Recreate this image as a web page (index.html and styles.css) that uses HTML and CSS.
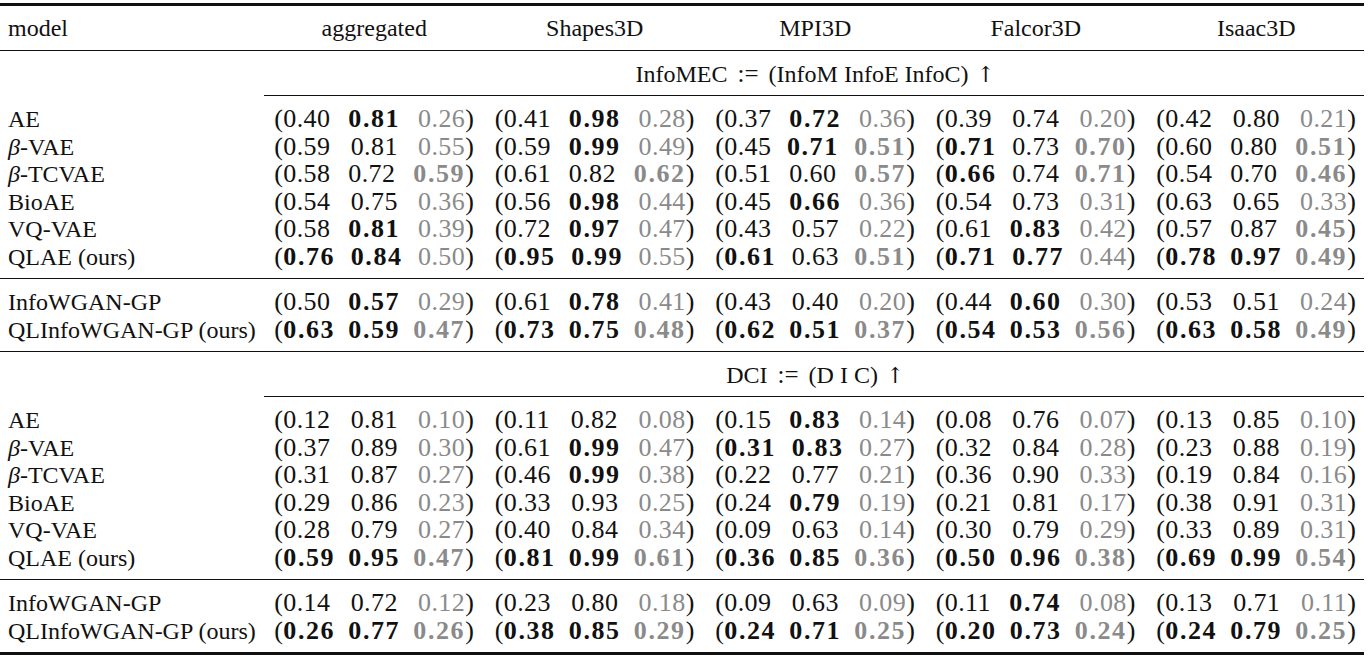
FILE: index.html
```html
<!DOCTYPE html>
<html>
<head>
<meta charset="utf-8">
<link rel="stylesheet" href="styles.css">
</head>
<body>
<div class="table">
  <div class="rule thick"></div>
  <div class="row head">
    <div class="name">model</div>
    <div class="col">aggregated</div>
    <div class="col">Shapes3D</div>
    <div class="col">MPI3D</div>
    <div class="col">Falcor3D</div>
    <div class="col">Isaac3D</div>
  </div>
  <div class="rule mid"></div>
  <div class="row group">
    <div class="name"></div>
    <div class="span">InfoMEC <span class="op">:=</span> (InfoM InfoE InfoC) <span class="arrow">↑</span></div>
  </div>
  <div class="rule cmid"></div>

  <div class="row">
    <div class="name">AE</div>
    <div class="tup"><span class="n">(0.40</span><span class="n b">0.81</span><span class="n"><span class="g">0.26</span>)</span></div>
    <div class="tup"><span class="n">(0.41</span><span class="n b">0.98</span><span class="n"><span class="g">0.28</span>)</span></div>
    <div class="tup"><span class="n">(0.37</span><span class="n b">0.72</span><span class="n"><span class="g">0.36</span>)</span></div>
    <div class="tup"><span class="n">(0.39</span><span class="n">0.74</span><span class="n"><span class="g">0.20</span>)</span></div>
    <div class="tup"><span class="n">(0.42</span><span class="n">0.80</span><span class="n"><span class="g">0.21</span>)</span></div>
  </div>
  <div class="row">
    <div class="name"><span class="beta">β</span>-VAE</div>
    <div class="tup"><span class="n">(0.59</span><span class="n">0.81</span><span class="n"><span class="g">0.55</span>)</span></div>
    <div class="tup"><span class="n">(0.59</span><span class="n b">0.99</span><span class="n"><span class="g">0.49</span>)</span></div>
    <div class="tup"><span class="n">(0.45</span><span class="n b">0.71</span><span class="n"><span class="g b">0.51</span>)</span></div>
    <div class="tup"><span class="n">(<span class="b">0.71</span></span><span class="n">0.73</span><span class="n"><span class="g b">0.70</span>)</span></div>
    <div class="tup"><span class="n">(0.60</span><span class="n">0.80</span><span class="n"><span class="g b">0.51</span>)</span></div>
  </div>
  <div class="row">
    <div class="name"><span class="beta">β</span>-TCVAE</div>
    <div class="tup"><span class="n">(0.58</span><span class="n">0.72</span><span class="n"><span class="g b">0.59</span>)</span></div>
    <div class="tup"><span class="n">(0.61</span><span class="n">0.82</span><span class="n"><span class="g b">0.62</span>)</span></div>
    <div class="tup"><span class="n">(0.51</span><span class="n">0.60</span><span class="n"><span class="g b">0.57</span>)</span></div>
    <div class="tup"><span class="n">(<span class="b">0.66</span></span><span class="n">0.74</span><span class="n"><span class="g b">0.71</span>)</span></div>
    <div class="tup"><span class="n">(0.54</span><span class="n">0.70</span><span class="n"><span class="g b">0.46</span>)</span></div>
  </div>
  <div class="row">
    <div class="name">BioAE</div>
    <div class="tup"><span class="n">(0.54</span><span class="n">0.75</span><span class="n"><span class="g">0.36</span>)</span></div>
    <div class="tup"><span class="n">(0.56</span><span class="n b">0.98</span><span class="n"><span class="g">0.44</span>)</span></div>
    <div class="tup"><span class="n">(0.45</span><span class="n b">0.66</span><span class="n"><span class="g">0.36</span>)</span></div>
    <div class="tup"><span class="n">(0.54</span><span class="n">0.73</span><span class="n"><span class="g">0.31</span>)</span></div>
    <div class="tup"><span class="n">(0.63</span><span class="n">0.65</span><span class="n"><span class="g">0.33</span>)</span></div>
  </div>
  <div class="row">
    <div class="name">VQ-VAE</div>
    <div class="tup"><span class="n">(0.58</span><span class="n b">0.81</span><span class="n"><span class="g">0.39</span>)</span></div>
    <div class="tup"><span class="n">(0.72</span><span class="n b">0.97</span><span class="n"><span class="g">0.47</span>)</span></div>
    <div class="tup"><span class="n">(0.43</span><span class="n">0.57</span><span class="n"><span class="g">0.22</span>)</span></div>
    <div class="tup"><span class="n">(0.61</span><span class="n b">0.83</span><span class="n"><span class="g">0.42</span>)</span></div>
    <div class="tup"><span class="n">(0.57</span><span class="n">0.87</span><span class="n"><span class="g b">0.45</span>)</span></div>
  </div>
  <div class="row">
    <div class="name">QLAE (ours)</div>
    <div class="tup"><span class="n">(<span class="b">0.76</span></span><span class="n b">0.84</span><span class="n"><span class="g">0.50</span>)</span></div>
    <div class="tup"><span class="n">(<span class="b">0.95</span></span><span class="n b">0.99</span><span class="n"><span class="g">0.55</span>)</span></div>
    <div class="tup"><span class="n">(<span class="b">0.61</span></span><span class="n">0.63</span><span class="n"><span class="g b">0.51</span>)</span></div>
    <div class="tup"><span class="n">(<span class="b">0.71</span></span><span class="n b">0.77</span><span class="n"><span class="g">0.44</span>)</span></div>
    <div class="tup"><span class="n">(<span class="b">0.78</span></span><span class="n b">0.97</span><span class="n"><span class="g b">0.49</span>)</span></div>
  </div>
  <div class="rule mid"></div>
  <div class="row">
    <div class="name">InfoWGAN-GP</div>
    <div class="tup"><span class="n">(0.50</span><span class="n b">0.57</span><span class="n"><span class="g">0.29</span>)</span></div>
    <div class="tup"><span class="n">(0.61</span><span class="n b">0.78</span><span class="n"><span class="g">0.41</span>)</span></div>
    <div class="tup"><span class="n">(0.43</span><span class="n">0.40</span><span class="n"><span class="g">0.20</span>)</span></div>
    <div class="tup"><span class="n">(0.44</span><span class="n b">0.60</span><span class="n"><span class="g">0.30</span>)</span></div>
    <div class="tup"><span class="n">(0.53</span><span class="n">0.51</span><span class="n"><span class="g">0.24</span>)</span></div>
  </div>
  <div class="row">
    <div class="name">QLInfoWGAN-GP (ours)</div>
    <div class="tup"><span class="n">(<span class="b">0.63</span></span><span class="n b">0.59</span><span class="n"><span class="g b">0.47</span>)</span></div>
    <div class="tup"><span class="n">(<span class="b">0.73</span></span><span class="n b">0.75</span><span class="n"><span class="g b">0.48</span>)</span></div>
    <div class="tup"><span class="n">(<span class="b">0.62</span></span><span class="n b">0.51</span><span class="n"><span class="g b">0.37</span>)</span></div>
    <div class="tup"><span class="n">(<span class="b">0.54</span></span><span class="n b">0.53</span><span class="n"><span class="g b">0.56</span>)</span></div>
    <div class="tup"><span class="n">(<span class="b">0.63</span></span><span class="n b">0.58</span><span class="n"><span class="g b">0.49</span>)</span></div>
  </div>
  <div class="rule mid"></div>

  <div class="row group">
    <div class="name"></div>
    <div class="span">DCI <span class="op">:=</span> (D I C) <span class="arrow">↑</span></div>
  </div>
  <div class="rule cmid"></div>

  <div class="row">
    <div class="name">AE</div>
    <div class="tup"><span class="n">(0.12</span><span class="n">0.81</span><span class="n"><span class="g">0.10</span>)</span></div>
    <div class="tup"><span class="n">(0.11</span><span class="n">0.82</span><span class="n"><span class="g">0.08</span>)</span></div>
    <div class="tup"><span class="n">(0.15</span><span class="n b">0.83</span><span class="n"><span class="g">0.14</span>)</span></div>
    <div class="tup"><span class="n">(0.08</span><span class="n">0.76</span><span class="n"><span class="g">0.07</span>)</span></div>
    <div class="tup"><span class="n">(0.13</span><span class="n">0.85</span><span class="n"><span class="g">0.10</span>)</span></div>
  </div>
  <div class="row">
    <div class="name"><span class="beta">β</span>-VAE</div>
    <div class="tup"><span class="n">(0.37</span><span class="n">0.89</span><span class="n"><span class="g">0.30</span>)</span></div>
    <div class="tup"><span class="n">(0.61</span><span class="n b">0.99</span><span class="n"><span class="g">0.47</span>)</span></div>
    <div class="tup"><span class="n">(<span class="b">0.31</span></span><span class="n b">0.83</span><span class="n"><span class="g">0.27</span>)</span></div>
    <div class="tup"><span class="n">(0.32</span><span class="n">0.84</span><span class="n"><span class="g">0.28</span>)</span></div>
    <div class="tup"><span class="n">(0.23</span><span class="n">0.88</span><span class="n"><span class="g">0.19</span>)</span></div>
  </div>
  <div class="row">
    <div class="name"><span class="beta">β</span>-TCVAE</div>
    <div class="tup"><span class="n">(0.31</span><span class="n">0.87</span><span class="n"><span class="g">0.27</span>)</span></div>
    <div class="tup"><span class="n">(0.46</span><span class="n b">0.99</span><span class="n"><span class="g">0.38</span>)</span></div>
    <div class="tup"><span class="n">(0.22</span><span class="n">0.77</span><span class="n"><span class="g">0.21</span>)</span></div>
    <div class="tup"><span class="n">(0.36</span><span class="n">0.90</span><span class="n"><span class="g">0.33</span>)</span></div>
    <div class="tup"><span class="n">(0.19</span><span class="n">0.84</span><span class="n"><span class="g">0.16</span>)</span></div>
  </div>
  <div class="row">
    <div class="name">BioAE</div>
    <div class="tup"><span class="n">(0.29</span><span class="n">0.86</span><span class="n"><span class="g">0.23</span>)</span></div>
    <div class="tup"><span class="n">(0.33</span><span class="n">0.93</span><span class="n"><span class="g">0.25</span>)</span></div>
    <div class="tup"><span class="n">(0.24</span><span class="n b">0.79</span><span class="n"><span class="g">0.19</span>)</span></div>
    <div class="tup"><span class="n">(0.21</span><span class="n">0.81</span><span class="n"><span class="g">0.17</span>)</span></div>
    <div class="tup"><span class="n">(0.38</span><span class="n">0.91</span><span class="n"><span class="g">0.31</span>)</span></div>
  </div>
  <div class="row">
    <div class="name">VQ-VAE</div>
    <div class="tup"><span class="n">(0.28</span><span class="n">0.79</span><span class="n"><span class="g">0.27</span>)</span></div>
    <div class="tup"><span class="n">(0.40</span><span class="n">0.84</span><span class="n"><span class="g">0.34</span>)</span></div>
    <div class="tup"><span class="n">(0.09</span><span class="n">0.63</span><span class="n"><span class="g">0.14</span>)</span></div>
    <div class="tup"><span class="n">(0.30</span><span class="n">0.79</span><span class="n"><span class="g">0.29</span>)</span></div>
    <div class="tup"><span class="n">(0.33</span><span class="n">0.89</span><span class="n"><span class="g">0.31</span>)</span></div>
  </div>
  <div class="row">
    <div class="name">QLAE (ours)</div>
    <div class="tup"><span class="n">(<span class="b">0.59</span></span><span class="n b">0.95</span><span class="n"><span class="g b">0.47</span>)</span></div>
    <div class="tup"><span class="n">(<span class="b">0.81</span></span><span class="n b">0.99</span><span class="n"><span class="g b">0.61</span>)</span></div>
    <div class="tup"><span class="n">(<span class="b">0.36</span></span><span class="n b">0.85</span><span class="n"><span class="g b">0.36</span>)</span></div>
    <div class="tup"><span class="n">(<span class="b">0.50</span></span><span class="n b">0.96</span><span class="n"><span class="g b">0.38</span>)</span></div>
    <div class="tup"><span class="n">(<span class="b">0.69</span></span><span class="n b">0.99</span><span class="n"><span class="g b">0.54</span>)</span></div>
  </div>
  <div class="rule mid"></div>
  <div class="row">
    <div class="name">InfoWGAN-GP</div>
    <div class="tup"><span class="n">(0.14</span><span class="n">0.72</span><span class="n"><span class="g">0.12</span>)</span></div>
    <div class="tup"><span class="n">(0.23</span><span class="n">0.80</span><span class="n"><span class="g">0.18</span>)</span></div>
    <div class="tup"><span class="n">(0.09</span><span class="n">0.63</span><span class="n"><span class="g">0.09</span>)</span></div>
    <div class="tup"><span class="n">(0.11</span><span class="n b">0.74</span><span class="n"><span class="g">0.08</span>)</span></div>
    <div class="tup"><span class="n">(0.13</span><span class="n">0.71</span><span class="n"><span class="g">0.11</span>)</span></div>
  </div>
  <div class="row">
    <div class="name">QLInfoWGAN-GP (ours)</div>
    <div class="tup"><span class="n">(<span class="b">0.26</span></span><span class="n b">0.77</span><span class="n"><span class="g b">0.26</span>)</span></div>
    <div class="tup"><span class="n">(<span class="b">0.38</span></span><span class="n b">0.85</span><span class="n"><span class="g b">0.29</span>)</span></div>
    <div class="tup"><span class="n">(<span class="b">0.24</span></span><span class="n b">0.71</span><span class="n"><span class="g b">0.25</span>)</span></div>
    <div class="tup"><span class="n">(<span class="b">0.20</span></span><span class="n b">0.73</span><span class="n"><span class="g b">0.24</span>)</span></div>
    <div class="tup"><span class="n">(<span class="b">0.24</span></span><span class="n b">0.79</span><span class="n"><span class="g b">0.25</span>)</span></div>
  </div>
  <div class="rule thick"></div>
</div>
</body>
</html>
```
FILE: styles.css
```css
html, body {
  margin: 0;
  padding: 0;
  background: #ffffff;
}

body {
  font-family: "Liberation Serif", "Times New Roman", serif;
  color: #111111;
}

.table {
  width: 1364px;
  padding-top: 3px;
}

.rule {
  background: #111111;
  margin: 7.5px 0 9px 0;
}

.rule.thick {
  height: 2.6px;
}

.table > .rule.thick:first-child {
  margin-top: 0;
}

.rule.mid {
  height: 1.6px;
}

.rule.cmid {
  height: 1px;
  margin-left: 264px;
}

.row {
  display: grid;
  grid-template-columns: 264px repeat(5, 220.5px);
  height: 27.5px;
  align-items: baseline;
  font-size: 24px;
  line-height: 27.5px;
}

.name {
  padding-left: 8px;
  white-space: nowrap;
}

.beta {
  font-style: italic;
}

.col {
  text-align: center;
}

.group .span {
  grid-column: 2 / 7;
  text-align: center;
  white-space: nowrap;
}

.op {
  font-size: 25px;
  padding: 0 4px;
}

.arrow {
  font-family: "DejaVu Serif", serif;
  font-variant-emoji: text;
  font-size: 22px;
  color: #111111;
  padding-left: 2px;
}

.tup {
  justify-self: center;
  width: 200px;
  display: flex;
  justify-content: space-between;
  align-items: baseline;
  font-size: 26px;
  white-space: nowrap;
}

.n {
  letter-spacing: 0.4px;
}

.b {
  font-weight: bold;
  letter-spacing: 1.6px;
}

.g {
  color: #8a8a8a;
}
```
